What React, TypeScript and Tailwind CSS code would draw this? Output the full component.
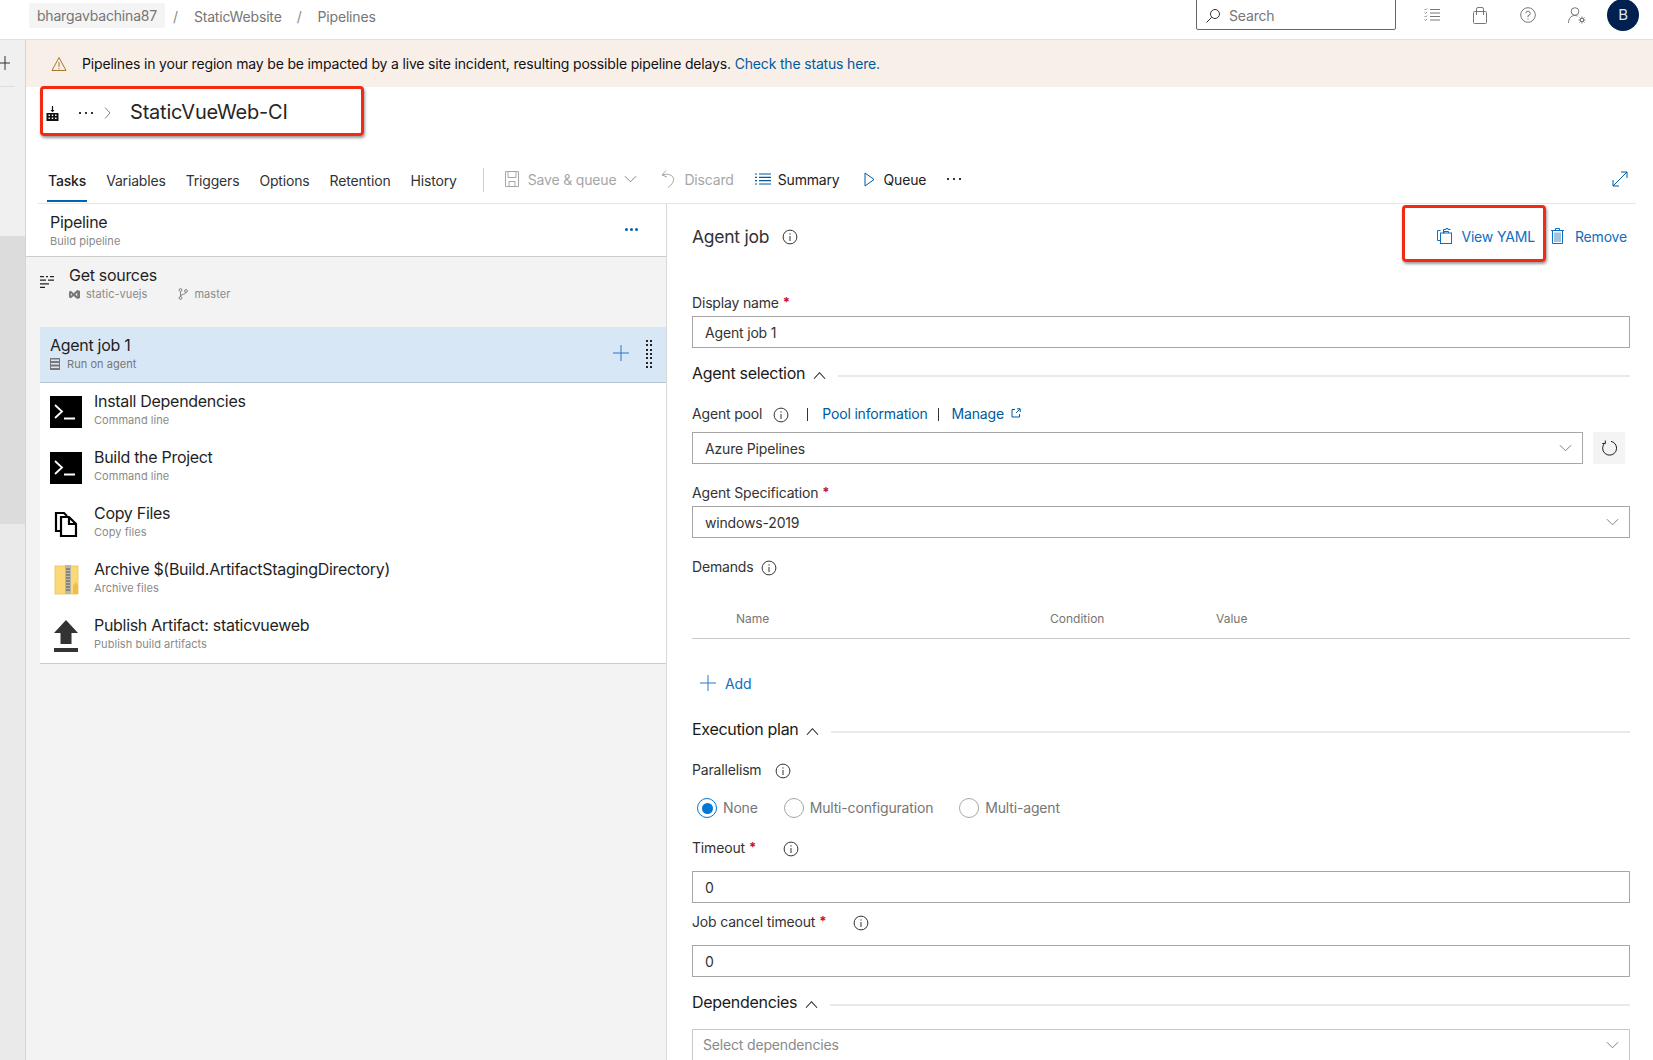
import React from "react";

const Info = ({ className = "" }: { className?: string }) => (
  <svg viewBox="0 0 16 16" className={`w-4 h-4 shrink-0 ${className}`} fill="none" stroke="#333" strokeWidth="1">
    <circle cx="8" cy="8" r="6.9" />
    <circle cx="8" cy="4.9" r="0.7" fill="#333" stroke="none" />
    <path d="M8 7v5" />
  </svg>
);

const Chevron = ({ className = "" }: { className?: string }) => (
  <svg viewBox="0 0 14 8" className={`w-[13px] h-[8px] shrink-0 ${className}`} fill="none" stroke="#777" strokeWidth="1">
    <path d="M1 1l6 6 6-6" />
  </svg>
);

const ChevronUp = () => (
  <svg viewBox="0 0 14 9" className="w-[13px] h-[9px] shrink-0 mt-[4px]" fill="none" stroke="#222" strokeWidth="1.1">
    <path d="M1 8l6-6.5L13 8" />
  </svg>
);

const Star = () => <span className="text-[#c8102e] ml-[4px] text-[13px] font-bold">*</span>;

const Label = ({ children }: { children: React.ReactNode }) => (
  <span className="text-[14px] leading-5 text-[#333333]">{children}</span>
);

const Section = ({ title, gap, cls }: { title: string; gap: string; cls: string }) => (
  <div className={`flex items-center h-6 ${cls}`}>
    <span className="text-[16px] leading-6 tracking-[-0.3px] text-[#1a1a1a]">{title}</span>
    <span className={gap}>
      <ChevronUp />
    </span>
    <div className="flex-1 h-[2px] bg-[#eaeaea] ml-[12px] mt-[5px]" />
  </div>
);

const Input = ({ value, cls = "" }: { value: string; cls?: string }) => (
  <div className={`h-[32px] border border-[#a6a6a6] flex items-center pl-3 text-[14px] text-[#333333] ${cls}`}>{value}</div>
);

const Terminal = () => (
  <svg viewBox="0 0 32 32" className="w-8 h-8 shrink-0">
    <rect width="32" height="32" fill="#000" />
    <path d="M5 9l7 6.5L5 22" fill="none" stroke="#fff" strokeWidth="1.8" />
    <path d="M14 22.5h11" stroke="#fff" strokeWidth="2" />
  </svg>
);

const CopyIcon = () => (
  <svg viewBox="0 0 32 32" className="w-8 h-8 shrink-0" fill="none" stroke="#000" strokeWidth="2.2">
    <path d="M11 23H6V5h8l3 3" fill="#fff" />
    <path d="M11 9h8l7 7v12H11z" fill="#fff" />
    <path d="M19 9v7h7" />
  </svg>
);

const ArchiveIcon = () => (
  <svg viewBox="0 0 32 32" className="w-8 h-8 shrink-0">
    <rect x="5" y="2" width="23" height="28" fill="#fbd976" stroke="#e8c35a" strokeWidth="0.8" />
    <path d="M23 30V22l2.500-4 2.500 4v8z" fill="#f1bd4a" />
    <rect x="15" y="1" width="6" height="29" fill="#b8b8a8" />
    <path d="M16 5h4M16 8h4M16 11h4M16 14h4M16 17h4M16 20h4M16 23h4M16 26h4" stroke="#555" strokeWidth="1" />
  </svg>
);

const PublishIcon = () => (
  <svg viewBox="0 0 32 32" className="w-8 h-8 shrink-0" fill="#333">
    <path d="M16 0L28 13H21.5V24H10.500V13H4z" />
    <rect x="4" y="28" width="24" height="4" />
  </svg>
);

const Step = ({ icon, title, sub }: { icon: React.ReactNode; title: string; sub: string }) => (
  <div className="h-[56px] flex pl-[10px]">
    <div className="pt-[13px]">{icon}</div>
    <div className="ml-3 pt-[6px]">
      <div className="text-[16px] leading-6 tracking-[-0.3px] text-[#1f1f1f]">{title}</div>
      <div className="text-[11px] leading-[14px] tracking-[0.05px] text-[#8a8a8a]">{sub}</div>
    </div>
  </div>
);

const Radio = ({ label, checked, cls }: { label: string; checked?: boolean; cls: string }) => (
  <div className={`flex items-center ${cls}`}>
    <div className={`w-5 h-5 rounded-full border flex items-center justify-center ${checked ? "border-[#0078d4]" : "border-[#a6a6a6]"}`}>
      {checked && <div className="w-[11px] h-[11px] rounded-full bg-[#0078d4]" />}
    </div>
    <span className="ml-[6px] text-[14px] leading-5 text-[#767676]">{label}</span>
  </div>
);

const Dots = ({ cls, dot }: { cls: string; dot: string }) => (
  <div className={`flex gap-[4px] ${cls}`}>
    <i className={dot} />
    <i className={dot} />
    <i className={dot} />
  </div>
);

export default function App() {
  return (
    <div className="relative w-[1653px] h-[1060px] overflow-hidden bg-white font-['Inter',sans-serif] text-[14px] tracking-[-0.17px] text-[#333333]">
      {/* Header */}
      <header className="h-[40px] flex items-start border-b border-[#e6dfda] pl-[29px]">
        <div className="h-[25px] mt-[3px] w-[136px] bg-[#f4f4f4] rounded-[2px] flex items-center justify-center text-[14px] text-[#767676]">bhargavbachina87</div>
        <span className="ml-[8px] mt-[6px] text-[#8a8a8a]">/</span>
        <span className="ml-[16px] mt-[6px] text-[#767676]">StaticWebsite</span>
        <span className="ml-[15px] mt-[6px] text-[#8a8a8a]">/</span>
        <span className="ml-[16px] mt-[6px] text-[#767676]">Pipelines</span>
        <div className="ml-auto w-[200px] h-[31px] -mt-[1px] border border-[#666666] rounded-b-[2px] flex items-center pl-[8px] pt-[2px] mr-[14px]">
          <svg viewBox="0 0 16 16" className="w-4 h-4" fill="none" stroke="#333" strokeWidth="1">
            <circle cx="10" cy="6" r="4.5" />
            <path d="M6.7 9.3L1.5 14.5" />
          </svg>
          <span className="ml-[8px] text-[#767676]">Search</span>
        </div>
        <div className="flex items-start mt-[7px] mr-[21px]">
          <svg viewBox="0 0 16 14" className="w-4 h-[14px] ml-[14px] mt-[1px]" fill="none" stroke="#777" strokeWidth="1">
            <path d="M6 1.5h10M6 5h10M6 8.5h10M6 12h10" />
            <path d="M0.5 1l1 1 1.5-1.5M0.5 4.5l1 1L3 4M0.5 8l1 1L3 7.5M0.5 11.5l1 1L3 11" strokeWidth="0.8" />
          </svg>
          <svg viewBox="0 0 14 17" className="w-[14px] h-[17px] ml-[33px]" fill="none" stroke="#777" strokeWidth="1">
            <rect x="0.5" y="4.5" width="13" height="12" rx="1" />
            <path d="M3.5 8V2A1.5 1.5 0 0 1 5 0.5h4A1.5 1.5 0 0 1 10.5 2V8" />
          </svg>
          <svg viewBox="0 0 16 16" className="w-4 h-4 ml-[33px]" fill="none" stroke="#777" strokeWidth="1">
            <circle cx="8" cy="8" r="7.3" />
            <path d="M5.8 6.2A2.2 2.2 0 1 1 8 8.6v1.6M8 11.5v1.2" />
          </svg>
          <svg viewBox="0 0 18 17" className="w-[18px] h-[17px] ml-[32px]" fill="none" stroke="#777" strokeWidth="1">
            <circle cx="7" cy="4.5" r="3.8" />
            <path d="M0.5 16c0-4.5 2.5-7.5 6.5-7.5 1 0 1.7.2 2.5.6" />
            <circle cx="14" cy="13" r="1.7" />
            <path d="M14 9.500v1.800M14 14.700v1.800M10.500 13h1.800M15.700 13h1.800M11.500 10.500l1.300 1.300M15.200 14.200l1.300 1.300M11.500 15.500l1.300-1.300M15.200 11.800l1.300-1.300" />
          </svg>
        </div>
        <div className="w-[32px] h-[32px] -mt-[1px] mr-[14px] rounded-full bg-[#002050] text-[#dfe6f0] flex items-center justify-center text-[15px]">B</div>
      </header>

      <div className="flex h-[1020px]">
        {/* Left strip */}
        <aside className="w-[26px] shrink-0 bg-[#f0f0f0] border-r border-[#d4d4d4] flex flex-col">
          <div className="h-[47px] border-b border-[#dcdcdc] pt-[16px] mr-[10px]">
            <svg viewBox="0 0 10 14" className="w-[10px] h-[14px]" fill="none" stroke="#333" strokeWidth="1">
              <path d="M0 7h10M5 0v14" />
            </svg>
          </div>
          <div className="h-[149px]" />
          <div className="h-[288px] bg-[#dcdcdc]" />
          <div className="flex-1 bg-[#eaeaea]" />
        </aside>

        {/* Main */}
        <main className="flex-1 flex flex-col min-w-0">
          <div className="h-[47px] shrink-0 bg-[#f9efe9] flex items-center pl-[25px]">
            <svg viewBox="0 0 16 16" className="w-4 h-4" fill="none" stroke="#a5762a" strokeWidth="1">
              <path d="M8 1.5L15 14.5H1z" strokeLinejoin="round" />
              <path d="M8 6v5M8 12v1.2" />
            </svg>
            <span className="ml-[15px] text-[14px] text-[#111111]">
              Pipelines in your region may be be impacted by a live site incident, resulting possible pipeline delays.{" "}
              <span className="text-[#005a9e]">Check the status here.</span>
            </span>
          </div>

          {/* Title */}
          <div className="h-[73px] shrink-0 flex items-start pl-[20px] pt-[17px]">
            <svg viewBox="0 0 12 15" className="w-[13px] h-[15px] mt-[2px]" fill="#111">
              <path d="M5.4 0h1.2v4H8L6 6.2 4 4h1.4z" />
              <path fillRule="evenodd" d="M0 7h12v8H0zM2 8.6v1.4h1.4V8.6zm3.3 0v1.4h1.4V8.6zm3.3 0v1.4H10V8.6zM2 11.6V13h1.4v-1.4zm3.3 0V13h1.4v-1.4zm3.3 0V13H10v-1.4z" />
            </svg>
            <Dots cls="ml-[20px] mt-[8px]" dot="block w-[2px] h-[2px] bg-[#333]" />
            <svg viewBox="0 0 7 12" className="w-[7px] h-[12px] ml-[11px] mt-[3px]" fill="none" stroke="#777" strokeWidth="0.9">
              <path d="M1 0.5L6 6L1 11.5" />
            </svg>
            <span className="ml-[19px] -mt-[6px] text-[20px] leading-7 tracking-[-0.2px] text-[#262626]">StaticVueWeb-CI</span>
          </div>

          {/* Tabs / toolbar */}
          <div className="h-[44px] shrink-0 ml-[12px] mr-[17px] border-b border-[#e6e6e6] flex items-center pl-[10px]">
            <div className="relative h-full flex items-center pb-[3px] font-medium text-[#222]">
              Tasks
              <div className="absolute left-[-1px] right-[-1px] bottom-[1px] h-[2px] bg-[#0063b1]" />
            </div>
            <span className="ml-[20px] pb-[3px]">Variables</span>
            <span className="ml-[20px] pb-[3px]">Triggers</span>
            <span className="ml-[20px] pb-[3px]">Options</span>
            <span className="ml-[20px] pb-[3px]">Retention</span>
            <span className="ml-[20px] pb-[3px]">History</span>
            <div className="ml-[26px] w-px h-[24px] mb-[3px] bg-[#cccccc]" />
            <div className="flex items-center pb-[5px] flex-1">
              <svg viewBox="0 0 14 16" className="w-[14px] h-4 ml-[21px]" fill="none" stroke="#a6a6a6" strokeWidth="1">
                <path d="M0.5 0.5h13v15H0.5zM3 0.5v6h8v-6M4 15.5v-5h6v5" />
              </svg>
              <span className="ml-[9px] text-[#a6a6a6]">Save &amp; queue</span>
              <Chevron className="ml-[8px]" />
              <svg viewBox="0 0 14 18" className="w-[14px] h-[18px] ml-[24px]" fill="none" stroke="#a6a6a6" strokeWidth="1">
                <path d="M1 5c5-1.5 9-.5 11 2 1.8 3-.5 7.5-5 10.500M1 5l4-4.500M1 5l5 2" />
              </svg>
              <span className="ml-[9px] text-[#a6a6a6]">Discard</span>
              <svg viewBox="0 0 16 12" className="w-4 h-3 ml-[21px]" fill="none" stroke="#005a9e" strokeWidth="1.2">
                <path d="M4 1h12M4 4.3h12M4 7.6h12M4 11h12M0 1h2M0 4.3h2M0 7.6h2M0 11h2" />
              </svg>
              <span className="ml-[7px] text-[#222]">Summary</span>
              <svg viewBox="0 0 11 15" className="w-[11px] h-[15px] ml-[24px]" fill="none" stroke="#005a9e" strokeWidth="1">
                <path d="M1 1l9 6.5L1 14z" />
              </svg>
              <span className="ml-[9px] text-[#222]">Queue</span>
              <Dots cls="ml-[21px]" dot="block w-[2px] h-[2px] bg-[#333]" />
              <svg viewBox="0 0 16 16" className="w-4 h-4 ml-auto mr-[8px]" fill="none" stroke="#005a9e" strokeWidth="1">
                <path d="M1 15L15 1M9 1h6v6M1 9v6h6" />
              </svg>
            </div>
          </div>

          {/* Panels */}
          <div className="flex-1 flex min-h-0">
            {/* Left panel */}
            <section className="w-[641px] shrink-0 border-r border-[#d8d8d8] bg-[#f3f3f3] flex flex-col">
              <div className="h-[53px] shrink-0 bg-white border-b border-[#cccccc] flex justify-between pl-[24px] pr-[28px]">
                <div className="pt-[6px]">
                  <div className="text-[16px] leading-6 tracking-[-0.3px] text-[#1f1f1f]">Pipeline</div>
                  <div className="text-[11px] leading-[14px] tracking-[0.05px] text-[#8a8a8a]">Build pipeline</div>
                </div>
                <div className="flex gap-[2px] mt-[24px] h-[3px]">
                  <i className="block w-[3px] h-[3px] rounded-full bg-[#0063b1]" />
                  <i className="block w-[3px] h-[3px] rounded-full bg-[#0063b1]" />
                  <i className="block w-[3px] h-[3px] rounded-full bg-[#0063b1]" />
                </div>
              </div>
              <div className="h-[70px] shrink-0 flex pl-[14px]">
                <svg viewBox="0 0 14 12" className="w-[14px] h-[12px] mt-[19px]" fill="none" stroke="#222" strokeWidth="1.2">
                  <path d="M0 0.6h4M6 0.6h2M10 0.6h4M0 4.2h6M8 4.2h6M0 7.8h9M0 11.4h5" />
                </svg>
                <div className="ml-[15px] pt-[6px]">
                  <div className="text-[16px] leading-6 tracking-[-0.3px] text-[#1f1f1f]">Get sources</div>
                  <div className="flex items-center text-[11px] leading-[14px] tracking-[0.05px] text-[#8a8a8a]">
                    <svg viewBox="0 0 12 12" className="w-[11px] h-[11px]" fill="#777">
                      <path d="M0 3l2-1 3 2.5L9 1l3 1.2v7.6L9 11 5 7.5 2 10l-2-1zM2 4.5v3L3.5 6zM9 4L7 6l2 2z" />
                    </svg>
                    <span className="ml-[6px]">static-vuejs</span>
                    <svg viewBox="0 0 10 12" className="w-[10px] h-[12px] ml-[31px]" fill="none" stroke="#777" strokeWidth="0.9">
                      <circle cx="2.5" cy="2" r="1.4" />
                      <circle cx="2.5" cy="10" r="1.4" />
                      <circle cx="8" cy="3" r="1.4" />
                      <path d="M2.5 3.5v5M8 4.5c0 2-5.5 1.5-5.5 4" />
                    </svg>
                    <span className="ml-[6px]">master</span>
                  </div>
                </div>
              </div>
              <div className="ml-[14px] shrink-0 bg-white border-b border-[#cccccc] h-[337px]">
                <div className="h-[56px] bg-[#d8e7f6] border-b border-[#b7c4d2] flex pl-[10px]">
                  <div className="pt-[6px]">
                    <div className="text-[16px] leading-6 tracking-[-0.3px] text-[#1f1f1f]">Agent job 1</div>
                    <div className="flex items-center text-[11px] leading-[14px] tracking-[0.05px] text-[#767676]">
                      <svg viewBox="0 0 10 12" className="w-[10px] h-[12px]" fill="#777">
                        <path fillRule="evenodd" d="M0 0h10v12H0zM1 1.5v1.500h8V1.500zM1 5v1.500h8V5zM1 8.500V10h8V8.500z" />
                      </svg>
                      <span className="ml-[7px]">Run on agent</span>
                    </div>
                  </div>
                  <svg viewBox="0 0 16 16" className="w-4 h-4 ml-auto mt-[18px]" fill="none" stroke="#2b79c9" strokeWidth="1">
                    <path d="M0 8h16M8 0v16" />
                  </svg>
                  <div className="ml-[17px] mr-[14px] mt-[13px] grid grid-cols-2 gap-x-[2px] gap-y-[1px] h-[28px] content-between">
                    {Array.from({ length: 14 }).map((_, i) => (
                      <i key={i} className="block w-[2px] h-[2px] bg-[#222]" />
                    ))}
                  </div>
                </div>
                <Step icon={<Terminal />} title="Install Dependencies" sub="Command line" />
                <Step icon={<Terminal />} title="Build the Project" sub="Command line" />
                <Step icon={<CopyIcon />} title="Copy Files" sub="Copy files" />
                <Step icon={<ArchiveIcon />} title="Archive $(Build.ArtifactStagingDirectory)" sub="Archive files" />
                <Step icon={<PublishIcon />} title="Publish Artifact: staticvueweb" sub="Publish build artifacts" />
              </div>
            </section>

            {/* Right panel */}
            <section className="flex-1 min-w-0 pl-[25px] pr-[23px]">
              <div className="h-[64px] flex items-center">
                <span className="text-[17.5px] tracking-[-0.25px] pt-[2px] text-[#333333]">Agent job</span>
                <Info className="ml-[13px] mt-[2px]" />
                <svg viewBox="0 0 15 16" className="w-[15px] h-4 ml-auto" fill="none" stroke="#106ebe" strokeWidth="1">
                  <path d="M3.500 12.500h-3V2.500h3M6.500 5.500V1.500h2.500V0.500h2V1.500h2.500" />
                  <rect x="3.500" y="5" width="11" height="10.500" />
                  <path d="M7 5V3.500h4.500V5" />
                </svg>
                <span className="ml-[9px] text-[#106ebe]">View YAML</span>
                <svg viewBox="0 0 13 16" className="w-[13px] h-4 ml-[16px]" fill="none" stroke="#106ebe" strokeWidth="1">
                  <path d="M0 2.500h13M4.500 2.500V0.500h4v2M1.500 2.500v13h10v-13" />
                  <rect x="3" y="4.500" width="7" height="9.500" fill="#9fc4e4" stroke="none" />
                </svg>
                <span className="ml-[11px] mr-[3px] text-[#106ebe]">Remove</span>
              </div>

              <div className="mt-[25px] h-5 flex items-center">
                <Label>Display name</Label>
                <Star />
              </div>
              <Input value="Agent job 1" cls="mt-[3px]" />

              <Section title="Agent selection" gap="ml-[8px]" cls="mt-[13px]" />

              <div className="mt-[19px] h-5 flex items-center">
                <Label>Agent pool</Label>
                <Info className="ml-[11px] mt-[2px]" />
                <div className="ml-[18px] w-px h-[13px] bg-[#333]" />
                <span className="ml-[14px] -mt-[2px] text-[#005a9e]">Pool information</span>
                <div className="ml-[10px] w-px h-[13px] bg-[#333]" />
                <span className="ml-[13px] -mt-[2px] text-[#005a9e]">Manage</span>
                <svg viewBox="0 0 10 10" className="w-[10px] h-[10px] ml-[7px] -mt-[2px]" fill="none" stroke="#005a9e" strokeWidth="1">
                  <path d="M4 1.500H1v7.500h7.500V6M5 5l4-4M6 0.800h3.200V4" />
                </svg>
              </div>
              <div className="mt-[8px] flex">
                <div className="w-[891px] h-[32px] border border-[#a6a6a6] flex items-center pl-3 pr-[10px] justify-between">
                  <span>Azure Pipelines</span>
                  <Chevron />
                </div>
                <div className="ml-[10px] w-[32px] h-[32px] bg-[#f4f4f4] flex items-center justify-center">
                  <svg viewBox="0 0 16 16" className="w-4 h-4" fill="none" stroke="#222" strokeWidth="1">
                    <path d="M4.500 2.500A7 7 0 1 0 10 1.300" />
                    <path d="M4.300 0.500v3h-3" />
                  </svg>
                </div>
              </div>

              <div className="mt-[19px] h-5 flex items-center">
                <Label>Agent Specification</Label>
                <Star />
              </div>
              <div className="mt-[3px] h-[32px] border border-[#a6a6a6] flex items-center pl-3 pr-[10px] justify-between">
                <span>windows-2019</span>
                <Chevron />
              </div>

              <div className="mt-[19px] h-5 flex items-center">
                <Label>Demands</Label>
                <Info className="ml-[8px] mt-[2px]" />
              </div>

              <div className="mt-[32px] h-[30px] border-b border-[#c8c8c8] grid grid-cols-[314px_166px_1fr] pl-[44px] text-[12px] leading-5 tracking-normal text-[#767676]">
                <span>Name</span>
                <span>Condition</span>
                <span>Value</span>
              </div>

              <div className="mt-[34px] h-5 flex items-center pl-[8px]">
                <svg viewBox="0 0 16 16" className="w-4 h-4" fill="none" stroke="#2b79c9" strokeWidth="1">
                  <path d="M0 8h16M8 0v16" />
                </svg>
                <span className="ml-[9px] text-[#106ebe]">Add</span>
              </div>

              <Section title="Execution plan" gap="ml-[7px]" cls="mt-[24px]" />

              <div className="mt-[19px] h-5 flex items-center">
                <Label>Parallelism</Label>
                <Info className="ml-[14px] mt-[2px]" />
              </div>

              <div className="mt-[18px] h-5 flex items-center pl-[5px]">
                <Radio label="None" checked cls="" />
                <Radio label="Multi-configuration" cls="ml-[26px]" />
                <Radio label="Multi-agent" cls="ml-[26px]" />
              </div>

              <div className="mt-[20px] h-5 flex items-center">
                <Label>Timeout</Label>
                <Star />
                <Info className="ml-[27px] mt-[2px]" />
              </div>
              <Input value="0" cls="mt-[13px]" />

              <div className="mt-[9px] h-5 flex items-center">
                <Label>Job cancel timeout</Label>
                <Star />
                <Info className="ml-[27px] mt-[2px]" />
              </div>
              <Input value="0" cls="mt-[13px]" />

              <Section title="Dependencies" gap="ml-[8px]" cls="mt-[13px]" />

              <div className="mt-[15px] h-[32px] border border-[#c8c8c8] flex items-center pl-[10px] pr-[10px] pb-[1px] justify-between">
                <span className="text-[#8a8a8a]">Select dependencies</span>
                <Chevron />
              </div>
            </section>
          </div>
        </main>
      </div>

      {/* Annotation boxes */}
      <div className="absolute left-[40px] top-[86px] w-[324px] h-[50px] border-[3px] border-[#f32a10] rounded-[4px] shadow-[1px_2px_3px_rgba(0,0,0,0.4)]" />
      <div className="absolute left-[1402px] top-[205px] w-[144px] h-[57px] border-[3px] border-[#f32a10] rounded-[4px] shadow-[1px_2px_3px_rgba(0,0,0,0.4)]" />
    </div>
  );
}
